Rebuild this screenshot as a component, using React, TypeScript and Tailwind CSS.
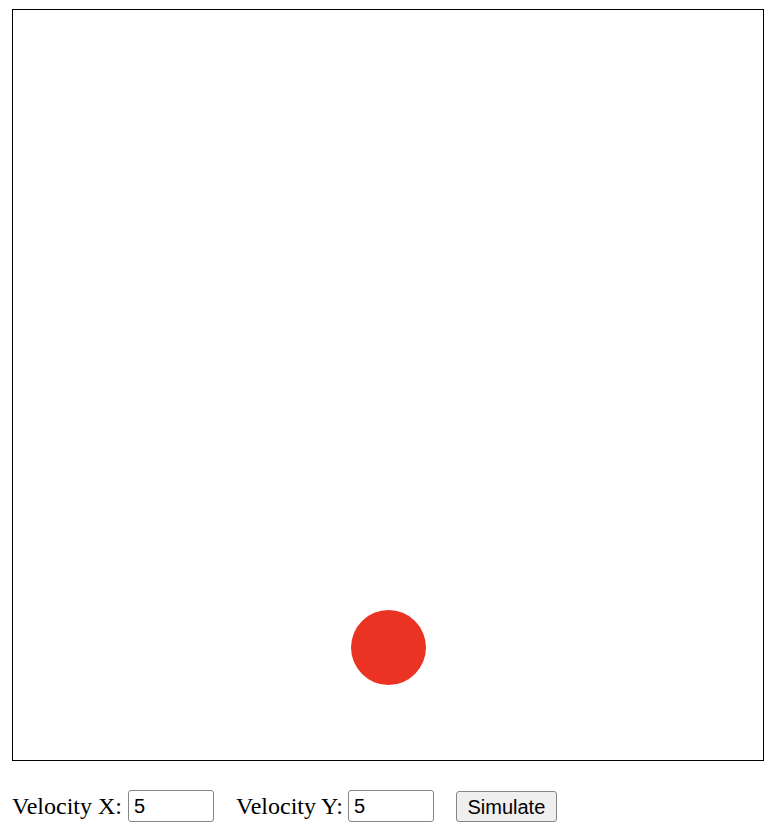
import { useState } from "react";

export default function App() {
  const [vx, setVx] = useState("5");
  const [vy, setVy] = useState("5");

  return (
    <div className="bg-white min-h-screen pl-[12px] pt-[9px] font-['Liberation_Serif',serif] text-black">
      {/* Canvas */}
      <div className="w-[752px] h-[752px] border border-black">
        <svg width="750" height="750" viewBox="0 0 750 750" className="block">
          <circle cx="375.5" cy="637.5" r="37.5" fill="#eb3324" />
        </svg>
      </div>

      {/* Controls */}
      <div className="flex items-center mt-[29px] h-[32px] text-[24px]">
        <label className="leading-none">Velocity X:</label>
        <input
          type="number"
          value={vx}
          onChange={e => setVx(e.target.value)}
          className="ml-[6px] w-[86px] h-[32px] border border-[#858585] rounded-[3px] pl-[5px] text-[20px] font-['Liberation_Sans',sans-serif] outline-none [appearance:textfield] [&::-webkit-inner-spin-button]:appearance-none"
        />
        <label className="ml-[22px] leading-none">Velocity Y:</label>
        <input
          type="number"
          value={vy}
          onChange={e => setVy(e.target.value)}
          className="ml-[5px] w-[86px] h-[32px] border border-[#858585] rounded-[3px] pl-[5px] text-[20px] font-['Liberation_Sans',sans-serif] outline-none [appearance:textfield] [&::-webkit-inner-spin-button]:appearance-none"
        />
        <button className="ml-[22px] mt-[1px] w-[101px] h-[31px] bg-[#efefef] border border-[#858585] rounded-[3px] text-[20px] leading-none font-['Liberation_Sans',sans-serif]">
          Simulate
        </button>
      </div>
    </div>
  );
}
